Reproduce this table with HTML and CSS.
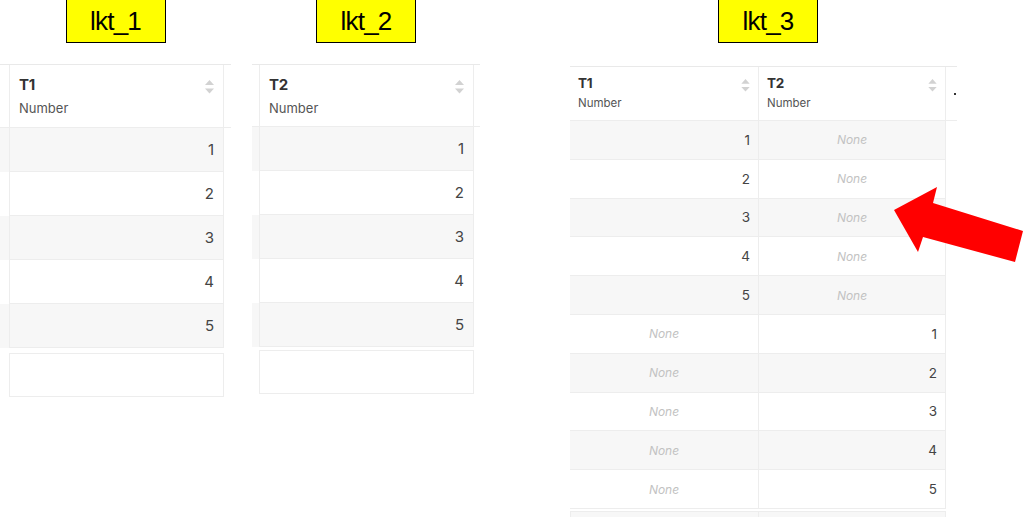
FILE: index.html
```html
<!DOCTYPE html>
<html>
<head>
<meta charset="utf-8">
<link rel="stylesheet" href="styles.css">
</head>
<body>
<div class="page">
  <section class="panel p1">
    <div class="label">lkt_1</div>
    <div class="tbl big">
      <div class="thead">
        <div class="stub sl1"></div>
        <div class="th">
          <div class="th-text"><b>T1</b><span>Number</span></div>
          <svg class="sort" viewBox="0 0 9 14" width="9" height="14"><path d="M4.5 0L9 5H0z"/><path d="M0 8.5h9L4.5 13.5z"/></svg>
        </div>
        <div class="stub sr1"></div>
      </div>
      <div class="tbody">
        <div class="tr odd"><div class="stub sl1"></div><div class="td num">1</div></div>
        <div class="tr"><div class="stub sl1"></div><div class="td num">2</div></div>
        <div class="tr odd"><div class="stub sl1"></div><div class="td num">3</div></div>
        <div class="tr"><div class="stub sl1"></div><div class="td num">4</div></div>
        <div class="tr odd"><div class="stub sl1"></div><div class="td num">5</div></div>
      </div>
      <div class="blank-row"><div class="stub sl1"></div><div class="blank"></div></div>
    </div>
  </section>

  <section class="panel p2">
    <div class="label">lkt_2</div>
    <div class="tbl big t2">
      <div class="thead">
        <div class="stub sl2"></div>
        <div class="th">
          <div class="th-text"><b>T2</b><span>Number</span></div>
          <svg class="sort" viewBox="0 0 9 14" width="9" height="14"><path d="M4.5 0L9 5H0z"/><path d="M0 8.5h9L4.5 13.5z"/></svg>
        </div>
        <div class="stub sr2"></div>
      </div>
      <div class="tbody">
        <div class="tr odd"><div class="stub sl2"></div><div class="td num">1</div></div>
        <div class="tr"><div class="stub sl2"></div><div class="td num">2</div></div>
        <div class="tr odd"><div class="stub sl2"></div><div class="td num">3</div></div>
        <div class="tr"><div class="stub sl2"></div><div class="td num">4</div></div>
        <div class="tr odd"><div class="stub sl2"></div><div class="td num">5</div></div>
      </div>
      <div class="blank-row"><div class="stub sl2"></div><div class="blank"></div></div>
    </div>
  </section>

  <section class="panel p3">
    <div class="label">lkt_3</div>
    <div class="tbl small">
      <div class="thead">
        <div class="th">
          <div class="th-text"><b>T1</b><span>Number</span></div>
          <svg class="sort" viewBox="0 0 9 14" width="9" height="13"><path d="M4.5 0L9 5H0z"/><path d="M0 8.5h9L4.5 13.5z"/></svg>
        </div>
        <div class="th">
          <div class="th-text"><b>T2</b><span>Number</span></div>
          <svg class="sort" viewBox="0 0 9 14" width="9" height="13"><path d="M4.5 0L9 5H0z"/><path d="M0 8.5h9L4.5 13.5z"/></svg>
        </div>
        <div class="stub sr3"><i class="dot"></i></div>
      </div>
      <div class="tbody">
        <div class="tr odd"><div class="td num">1</div><div class="td none">None</div></div>
        <div class="tr"><div class="td num">2</div><div class="td none">None</div></div>
        <div class="tr odd"><div class="td num">3</div><div class="td none">None</div></div>
        <div class="tr"><div class="td num">4</div><div class="td none">None</div></div>
        <div class="tr odd"><div class="td num">5</div><div class="td none">None</div></div>
        <div class="tr"><div class="td none">None</div><div class="td num">1</div></div>
        <div class="tr odd"><div class="td none">None</div><div class="td num">2</div></div>
        <div class="tr"><div class="td none">None</div><div class="td num">3</div></div>
        <div class="tr odd"><div class="td none">None</div><div class="td num">4</div></div>
        <div class="tr"><div class="td none">None</div><div class="td num">5</div></div>
      </div>
      <div class="tr tail"><div class="td"></div><div class="td"></div></div>
    </div>
  </section>
</div>

<svg class="arrow" viewBox="0 0 1024 517" width="1024" height="517">
  <polygon points="894,210 937,187 933,203 1023,231 1015,262 923,237 918,252" fill="#ff0000"/>
</svg>
</body>
</html>
```

FILE: styles.css
```css
* { box-sizing: border-box; }

html, body {
  margin: 0;
  padding: 0;
  background: #ffffff;
  width: 1024px;
  height: 517px;
  overflow: hidden;
}

body {
  position: relative;
  font-family: "Inter", "Open Sans", sans-serif;
  color: #444;
}

.page {
  display: flex;
  align-items: flex-start;
}

.panel {
  display: flex;
  flex-direction: column;
}

.p1 { width: 231px; }
.p2 { width: 228px; margin-left: 21px; }
.p3 { width: 387px; margin-left: 90px; }

.label {
  width: 100px;
  height: 43px;
  margin: 0 auto;
  background: #ffff00;
  border: 1px solid #000;
  border-top: none;
  display: flex;
  align-items: center;
  justify-content: center;
  font-family: "Liberation Sans", Arial, sans-serif;
  font-size: 26px;
  letter-spacing: -0.8px;
  color: #000;
  padding-top: 1px;
}

.p3 .label { margin: 0 0 0 148px; }

/* tables */
.tbl { display: flex; flex-direction: column; }
.big { margin-top: 21px; }
.small { margin-top: 23px; }

.thead {
  display: flex;
  border-top: 1px solid #e9e9e9;
  border-bottom: 1px solid #ededed;
}
.big .thead { height: 64px; }
.t2 .thead { height: 63px; }
.small .thead { height: 55px; }

.stub { flex: none; }
.sl1 { width: 9px; }
.sr1 { width: 7px; }
.sl2 { width: 7px; }
.sr2 { width: 6px; }
.sr3 {
  width: 11px;
  display: flex;
  align-items: center;
  padding-left: 8px;
}

.dot {
  display: block;
  width: 2px;
  height: 2px;
  background: #333;
}

.th {
  flex: none;
  display: flex;
  justify-content: space-between;
  align-items: flex-start;
}
.big .th {
  width: 215px;
  border-left: 1px solid #ededed;
  border-right: 1px solid #ededed;
  padding: 11px 9px 0 9px;
}
.small .th {
  width: 188px;
  padding: 8px 8px 0 8px;
}
.small .th + .th {
  border-left: 1px solid #ededed;
  border-right: 1px solid #ededed;
}

.th-text { display: flex; flex-direction: column; }
.th-text b {
  font-weight: 700;
  color: #333;
  letter-spacing: -0.3px;
}
.th-text span {
  color: #555;
  font-weight: 400;
}
.big .th-text b { font-size: 15px; line-height: 18px; }
.big .th-text span { font-size: 13px; line-height: 18px; margin-top: 5px; }
.small .th-text b { font-size: 13.5px; line-height: 16px; }
.small .th-text span { font-size: 11.5px; line-height: 16px; margin-top: 4px; }

.sort { fill: #d2d2d2; margin-top: 4px; }

.tbody { display: flex; flex-direction: column; }

.tr { display: flex; }
.big .tr { height: 44px; }
.small .tr { height: 38.8px; }

.tr.odd .stub,
.tr.odd .td { background: #f7f7f7; }

.td {
  flex: none;
  display: flex;
  align-items: center;
  border-bottom: 1px solid #ededed;
}
.big .td {
  width: 215px;
  padding: 0 9px;
  font-size: 15px;
  border-left: 1px solid #ededed;
  border-right: 1px solid #ededed;
}
.small .td {
  width: 188px;
  padding: 0 8px;
  font-size: 13.5px;
}
.small .td + .td {
  border-left: 1px solid #ededed;
  border-right: 1px solid #ededed;
}

.num { justify-content: flex-end; color: #444; }
.none {
  justify-content: center;
  font-style: italic;
  color: #c2c2c2;
}
.small .none { font-size: 12px; }

.blank-row { display: flex; margin-top: 5px; }
.t2 .blank-row { margin-top: 3px; }
.blank {
  width: 215px;
  height: 44px;
  border: 1px solid #ededed;
}

.small .tail {
  margin-top: 2px;
  height: 6px;
}
.tail .td {
  background: #f7f7f7;
  border-top: 1px solid #ededed;
  border-bottom: none;
}
.tail .td:first-child { border-left: 1px solid #ededed; }

.arrow {
  position: absolute;
  left: 0;
  top: 0;
  pointer-events: none;
}
```
